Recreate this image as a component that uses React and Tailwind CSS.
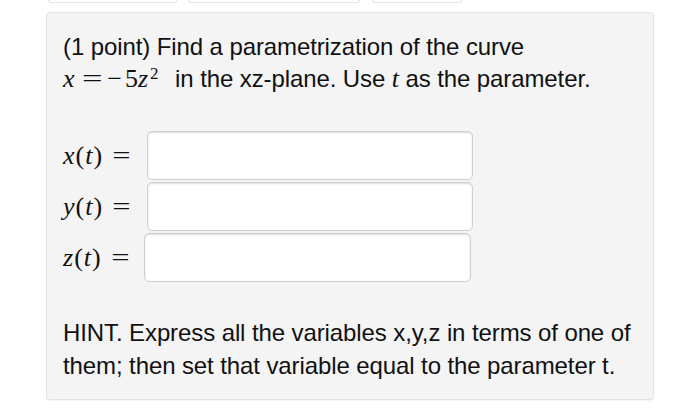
const MathLabel = ({ name }) => (
  <span className="whitespace-nowrap font-['Liberation_Serif','Times_New_Roman',serif] text-[26px] text-[#111]">
    <i className="pr-[1px]">{name}</i>(<i className="px-[1px]">t</i>)
    <span className="ml-[12px] inline-block scale-x-[1.25]">=</span>
  </span>
)

const AnswerRow = ({ name, shift }) => (
  <div className="flex items-center">
    <div className="w-[84px]">
      <MathLabel name={name} />
    </div>
    {shift ? (
      <input
        type="text"
        className="-ml-[3px] h-[49px] w-[327px] rounded-[5px] border border-[#cfcfcf] bg-white shadow-[inset_0_1px_2px_rgba(0,0,0,0.14)] outline-none"
      />
    ) : (
      <input
        type="text"
        className="h-[49px] w-[326px] rounded-[5px] border border-[#cfcfcf] bg-white shadow-[inset_0_1px_2px_rgba(0,0,0,0.14)] outline-none"
      />
    )}
  </div>
)

export default function App() {
  return (
    <div className="h-[415px] w-[700px] bg-white font-['Liberation_Sans',Arial,sans-serif] text-[#111]">
      <div className="flex h-[3px] pl-[48px]">
        <div className="h-full w-[129px] rounded-b-[3px] border-x border-b border-[#e4e4e4]" />
        <div className="ml-[11px] h-full w-[172px] rounded-b-[3px] border-x border-b border-[#e4e4e4]" />
        <div className="ml-[12px] h-full w-[90px] rounded-b-[3px] border-x border-b border-[#e4e4e4]" />
      </div>

      <div className="ml-[46px] mt-[9px] h-[388px] w-[608px] rounded-[4px] border border-[#e2e2e2] bg-[#f4f4f4] pl-[16px] pt-[18px] shadow-[0_1px_1px_rgba(0,0,0,0.05)]">
        <p className="text-[24px] leading-[32px] tracking-[-0.1px]">
          (1 point) Find a parametrization of the curve
          <br />
          <span className="mr-[10px] whitespace-nowrap font-['Liberation_Serif','Times_New_Roman',serif] text-[26px] tracking-normal">
            <i>x</i>
            <span className="ml-[10px] inline-block scale-x-[1.4]">=</span>
            <span className="ml-[8px]">−</span>
            <span className="ml-[3px]">5</span>
            <i>z</i>
            <sup className="ml-[2px] text-[17px]">2</sup>
          </span>{" "}
          in the xz-plane. Use{" "}
          <i className="font-['Liberation_Serif','Times_New_Roman',serif] text-[26px]">t</i> as the parameter.
        </p>

        <div className="mt-[36px] flex flex-col gap-[2px]">
          <AnswerRow name="x" />
          <AnswerRow name="y" />
          <AnswerRow name="z" shift />
        </div>

        <p className="mt-[34px] text-[24px] leading-[33px] tracking-[-0.1px]">
          HINT. Express all the variables x,y,z in terms of one of
          <br />
          them; then set that variable equal to the parameter t.
        </p>
      </div>
    </div>
  )
}
